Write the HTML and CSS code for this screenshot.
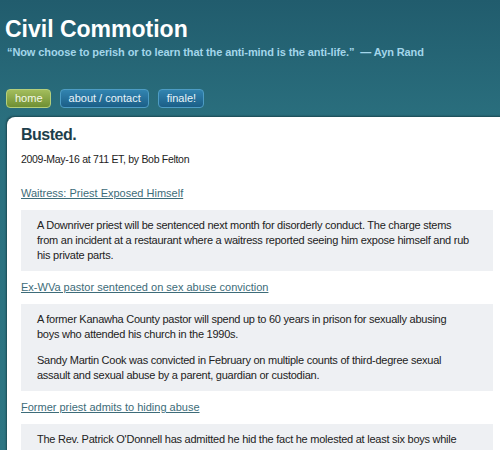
FILE: index.html
```html
<!DOCTYPE html>
<html>
<head>
<meta charset="utf-8">
<link rel="stylesheet" href="styles.css">
</head>
<body>
<div class="header">
  <h1 class="site-title">Civil Commotion</h1>
  <p class="tagline">“Now choose to perish or to learn that the anti-mind is the anti-life.” &nbsp;— Ayn Rand</p>
</div>
<nav class="nav">
  <a class="btn btn-active">home</a>
  <a class="btn">about / contact</a>
  <a class="btn">finale!</a>
</nav>
<main class="content">
  <h2 class="post-title">Busted.</h2>
  <p class="meta">2009-May-16 at 711 ET, by Bob Felton</p>

  <p class="item-link"><a>Waitress: Priest Exposed Himself</a></p>
  <blockquote class="quote">
    <p>A Downriver priest will be sentenced next month for disorderly conduct. The charge stems<br>from an incident at a restaurant where a waitress reported seeing him expose himself and rub<br>his private parts.</p>
  </blockquote>

  <p class="item-link"><a>Ex-WVa pastor sentenced on sex abuse conviction</a></p>
  <blockquote class="quote">
    <p>A former Kanawha County pastor will spend up to 60 years in prison for sexually abusing<br>boys who attended his church in the 1990s.</p>
    <p>Sandy Martin Cook was convicted in February on multiple counts of third-degree sexual<br>assault and sexual abuse by a parent, guardian or custodian.</p>
  </blockquote>

  <p class="item-link"><a>Former priest admits to hiding abuse</a></p>
  <blockquote class="quote">
    <p>The Rev. Patrick O'Donnell has admitted he hid the fact he molested at least six boys while<br>serving at a Seattle church decades ago.</p>
  </blockquote>
</main>
</body>
</html>
```

FILE: styles.css
```css
html, body {
  margin: 0;
  padding: 0;
}
body {
  width: 500px;
  height: 450px;
  overflow: hidden;
  background: linear-gradient(to bottom, #215c6d 0px, #2a6f7e 120px, #2e7683 450px);
  font-family: "Liberation Sans", Arial, sans-serif;
}
.header {
  padding: 16px 0 0 5px;
  height: 74px;
  box-sizing: border-box;
}
.site-title {
  margin: 0;
  font-size: 23px;
  line-height: 26px;
  font-weight: bold;
  color: #ffffff;
}
.tagline {
  margin: 3px 0 0 2px;
  font-size: 11px;
  font-weight: bold;
  letter-spacing: -0.1px;
  color: #a3d6ea;
  line-height: 14px;
}
.nav {
  display: flex;
  gap: 9px;
  padding: 15px 0 0 6px;
  height: 28px;
  box-sizing: content-box;
}
.btn {
  display: block;
  height: 17px;
  line-height: 17px;
  padding: 0 7px 0 8px;
  font-size: 11px;
  color: #e8f4fa;
  border: 1px solid #4d9cc4;
  border-radius: 4px;
  background: linear-gradient(to bottom, #3284b0, #1b5e87);
}
.btn-active {
  border-color: #b4cf7c;
  background: linear-gradient(to bottom, #a3bd5c, #6f8f33);
  color: #f4f8e8;
}
.content {
  margin-left: 7px;
  width: 520px;
  min-height: 400px;
  background: #ffffff;
  border-top-left-radius: 8px;
  box-shadow: -1px -1px 2px rgba(0, 0, 0, 0.35);
  padding: 9px 0 0 14px;
  box-sizing: border-box;
}
.post-title {
  margin: 0;
  font-size: 16px;
  line-height: 18px;
  font-weight: bold;
  letter-spacing: -0.5px;
  color: #1e3f4b;
}
.meta {
  margin: 8px 0 0 0;
  font-size: 10.5px;
  letter-spacing: -0.3px;
  line-height: 14px;
  color: #222222;
}
.item-link {
  margin: 20px 0 0 0;
  font-size: 11px;
  line-height: 14px;
}
.item-link a {
  color: #3d6c79;
  text-decoration: underline;
}
.quote {
  margin: 10px 0 0 0;
  width: 472px;
  box-sizing: border-box;
  background: #eef0f3;
  padding: 8px 8px 8px 16px;
  font-size: 11px;
  letter-spacing: -0.25px;
  line-height: 15px;
  color: #222222;
}
.quote p {
  margin: 0;
}
.quote p + p {
  margin-top: 11px;
}
.quote + .item-link {
  margin-top: 9px;
}
```
